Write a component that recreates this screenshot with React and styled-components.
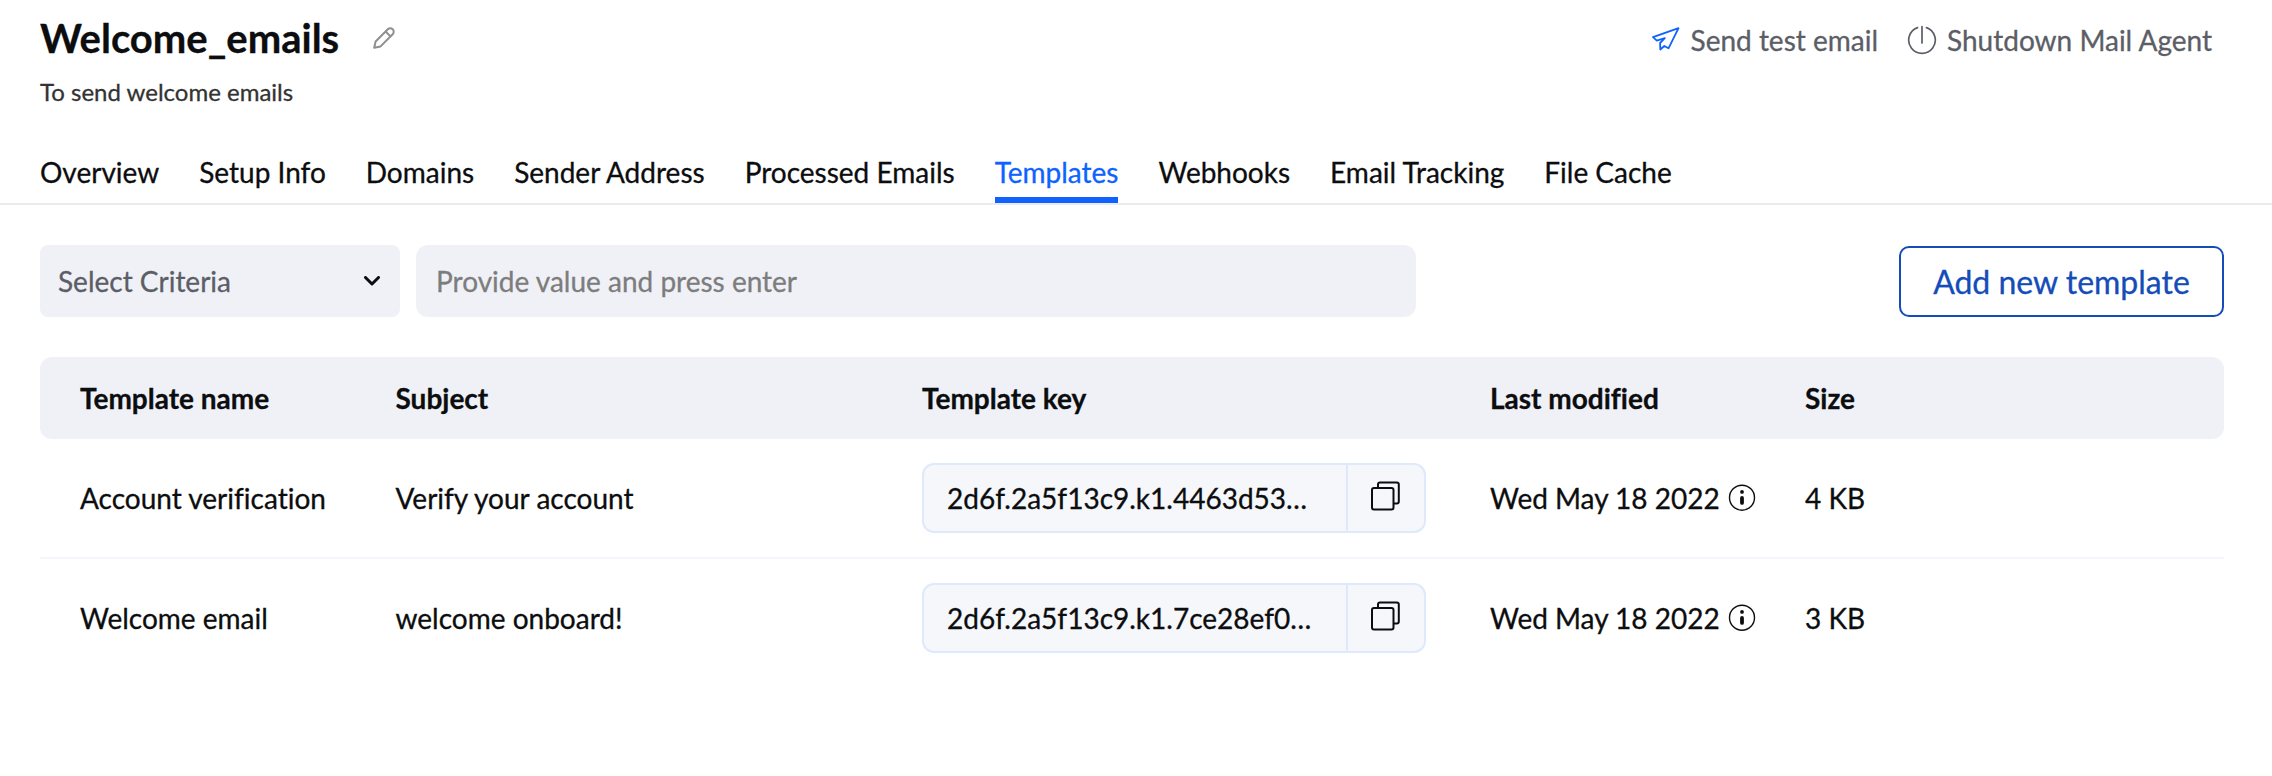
import React from "react";
import styled, { createGlobalStyle } from "styled-components";

const Global = createGlobalStyle`
  *, *::before, *::after { box-sizing: border-box; }
  body {
    margin: 0;
    background: #fff;
    color: #0c0d0f;
    font: 28px/36px Lato, "Liberation Sans", sans-serif;
    font-variant-ligatures: none;
    -webkit-text-stroke: 0.3px currentColor;
    -webkit-font-smoothing: antialiased;
  }
  button, input { font: inherit; color: inherit; -webkit-text-stroke: inherit; }
`;

const Page = styled.div`
  width: 2272px;
  min-height: 776px;
  background: #fff;
`;
const Header = styled.header`
  display: flex;
  justify-content: space-between;
  height: 145px;
  padding: 14px 60px 0 40px;
`;
const TitleRow = styled.div`
  display: flex;
  align-items: center;
  gap: 34px;
`;
const Title = styled.h1`
  margin: 0;
  font-size: 40px;
  line-height: 48px;
  font-weight: 700;
`;
const Subtitle = styled.p`
  margin: 15px 0 0;
  font-size: 24px;
  line-height: 30px;
  color: #333;
`;
const IconButton = styled.button`
  display: flex;
  padding: 0;
  border: 0;
  background: none;
`;
const Actions = styled.div`
  display: flex;
  gap: 29px;
  height: 52px;
  align-items: center;
`;
const Action = styled.button`
  display: flex;
  align-items: center;
  gap: ${(p) => p.$gap}px;
  padding: 0;
  border: 0;
  background: none;
  color: #5b5e66;
`;
const Tabs = styled.nav`
  display: flex;
  gap: 40px;
  height: 60px;
  padding: 0 40px;
  border-bottom: 2px solid #ebebeb;
`;
const Tab = styled.a`
  height: 58px;
  padding-top: 9px;
  color: ${(p) => (p.$active ? "#0f62fe" : "inherit")};
  border-bottom: 6px solid ${(p) => (p.$active ? "#0f62fe" : "transparent")};
`;
const Main = styled.main`
  padding: 40px 48px 0 40px;
`;
const Toolbar = styled.div`
  display: flex;
  align-items: flex-end;
  gap: 16px;
  margin-bottom: 40px;
`;
const Select = styled.div`
  display: flex;
  align-items: center;
  justify-content: space-between;
  width: 360px;
  height: 72px;
  padding: 0 20px 0 18px;
  border-radius: 8px;
  background: #f0f1f7;
  color: #5b5e66;
`;
const Search = styled.input`
  width: 1000px;
  height: 72px;
  padding: 0 20px;
  border: 0;
  border-radius: 12px;
  background: #f0f1f7;
  &::placeholder { color: #7d7d7d; opacity: 1; }
`;
const AddButton = styled.button`
  width: 325px;
  height: 71px;
  margin-left: auto;
  padding: 0;
  border: 2px solid #144cb8;
  border-radius: 10px;
  background: #fff;
  color: #144cb8;
  font-size: 32px;
`;
const Row = styled.div`
  display: grid;
  grid-template-columns: 315.5px 526.5px 568px 315px 1fr;
  align-items: center;
  height: 120px;
  padding-left: 40px;
  border-bottom: 2px solid ${(p) => (p.$last ? "transparent" : "#f5f6fb")};
`;
const HeadRow = styled(Row)`
  height: 82px;
  border: 0;
  border-radius: 12px;
  background: #f0f1f7;
  font-weight: 700;
`;
const KeyBox = styled.div`
  display: flex;
  width: 504px;
  height: 70px;
  border: 2px solid #deeafb;
  border-radius: 12px;
  background: #f5f7fb;
`;
const KeyText = styled.span`
  width: 424px;
  padding: 15px 23px 0;
  border-right: 2px solid #deeafb;
  white-space: nowrap;
`;
const CopyButton = styled(IconButton)`
  flex: 1;
  justify-content: center;
  padding-top: 15px;
`;
const DateCell = styled.div`
  display: flex;
  align-items: center;
  gap: 8.5px;
`;
const SendIcon = styled.svg`
  margin-bottom: 2px;
`;

const Pencil = () => (
  <svg width="22" height="22" viewBox="0 0 22 22" fill="none" stroke="#8f8f8f" strokeWidth="2" strokeLinejoin="round">
    <path d="M1.200 20.800 2.600 14.500 14.800 2.300a3.450 3.450 0 0 1 4.900 4.900L7.500 19.400Z M12.600 4.500l4.900 4.900" />
  </svg>
);
const Send = () => (
  <SendIcon width="28" height="24" viewBox="0 0 28 24" fill="none" stroke="#0f62fe" strokeWidth="1.8" strokeLinejoin="round">
    <path d="M1 10.200 26.500 1.200 16.500 21.300 12.300 19 8.300 22.500 8.100 16 12.800 11.200 4.800 13.600Z" />
  </SendIcon>
);
const Power = () => (
  <svg width="30" height="30" viewBox="0 0 30 30" fill="none" stroke="#5b5e66" strokeWidth="1.7" strokeLinecap="round">
    <path d="M10.5 2.6a13.3 13.3 0 1 0 9 0M15 1.500v16.500" />
  </svg>
);
const Chevron = () => (
  <svg width="16" height="10" viewBox="0 0 16 10" fill="none" stroke="#0c0d0f" strokeWidth="3" strokeLinecap="round" strokeLinejoin="round">
    <path d="M1.5 1.5 8 8l6.5-6.5" />
  </svg>
);
const Copy = () => (
  <svg width="30" height="32" viewBox="0 0 30 32" fill="none" stroke="#0c0d0f" strokeWidth="2">
    <rect x="1" y="8" width="21.500" height="21.500" rx="2" />
    <path d="M7 8V4.400a2 2 0 0 1 2-2h16.800a2 2 0 0 1 2 2v17.200a2 2 0 0 1-2 2h-3.300" />
  </svg>
);
const Info = () => (
  <svg width="28" height="28" viewBox="0 0 28 28" fill="none" stroke="#0c0d0f">
    <circle cx="14" cy="13.700" r="12.500" strokeWidth="1.4" />
    <circle cx="14" cy="7.900" r="1.900" fill="#0c0d0f" stroke="none" />
    <path d="M14 13.900v5" strokeWidth="3.800" strokeLinecap="round" />
  </svg>
);

const tabs = ["Overview", "Setup Info", "Domains", "Sender Address", "Processed Emails", "Templates", "Webhooks", "Email Tracking", "File Cache"];
const columns = ["Template name", "Subject", "Template key", "Last modified", "Size"];
const rows = [
  { name: "Account verification", subject: "Verify your account", key: "2d6f.2a5f13c9.k1.4463d53…", date: "Wed May 18 2022", size: "4 KB" },
  { name: "Welcome email", subject: "welcome onboard!", key: "2d6f.2a5f13c9.k1.7ce28ef0…", date: "Wed May 18 2022", size: "3 KB" },
];

export default function App() {
  return (
    <Page>
      <Global />
      <Header>
        <div>
          <TitleRow>
            <Title>Welcome_emails</Title>
            <IconButton aria-label="Edit"><Pencil /></IconButton>
          </TitleRow>
          <Subtitle>To send welcome emails</Subtitle>
        </div>
        <Actions>
          <Action $gap={11}><Send />Send test email</Action>
          <Action $gap={10}><Power />Shutdown Mail Agent</Action>
        </Actions>
      </Header>
      <Tabs>
        {tabs.map((t) => <Tab key={t} $active={t === "Templates"}>{t}</Tab>)}
      </Tabs>
      <Main>
        <Toolbar>
          <Select>Select Criteria<Chevron /></Select>
          <Search placeholder="Provide value and press enter" />
          <AddButton>Add new template</AddButton>
        </Toolbar>
        <HeadRow>{columns.map((c) => <span key={c}>{c}</span>)}</HeadRow>
        {rows.map((r, i) => (
          <Row key={r.name} $last={i === rows.length - 1}>
            <span>{r.name}</span>
            <span>{r.subject}</span>
            <KeyBox>
              <KeyText>{r.key}</KeyText>
              <CopyButton aria-label="Copy"><Copy /></CopyButton>
            </KeyBox>
            <DateCell>{r.date}<Info /></DateCell>
            <span>{r.size}</span>
          </Row>
        ))}
      </Main>
    </Page>
  );
}
